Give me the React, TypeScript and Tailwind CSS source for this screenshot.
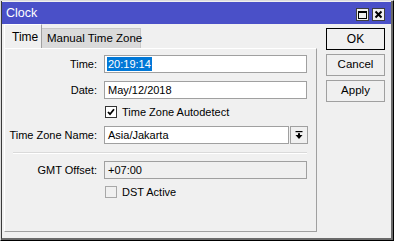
import React from "react";

const FONT = { fontFamily: '"Liberation Sans", Arial, sans-serif' };

function CheckBox({ checked, disabled }: { checked?: boolean; disabled?: boolean }) {
  return (
    <div
      className={`w-[12px] h-[12px] border flex items-center justify-center ${
        disabled ? "border-[#a8a8a8] bg-[#f0f0f0]" : "border-[#333] bg-white"
      }`}
    >
      {checked && (
        <svg width="8" height="8" viewBox="0 0 8 8">
          <path d="M1 4 L3 6.2 L7 1.2" stroke="#000" strokeWidth="1.8" fill="none" />
        </svg>
      )}
    </div>
  );
}

function Row({ label, children, className = "" }: { label: string; children: React.ReactNode; className?: string }) {
  return (
    <div className={`flex items-center h-[18px] ${className}`}>
      <div className="w-[93px] text-right pr-[1px] whitespace-nowrap">{label}</div>
      <div className="ml-[6px] flex">{children}</div>
    </div>
  );
}

export default function App() {
  return (
    <div
      className="w-[394px] h-[241px] bg-[#f0f0f0] border-l border-t border-l-[#dcdcdc] border-t-[#dcdcdc] border-r border-b border-r-black border-b-black text-[11px] text-black"
      style={FONT}
    >
      <div className="h-full flex flex-col border-l border-l-[#3a3a3a] border-r-2 border-b-2 border-r-[#6a6a6a] border-b-[#6a6a6a]">
        {/* title bar */}
        <div className="h-[22px] mt-[1px] bg-[#4a50c8] flex items-center justify-between pl-[4px] pr-[6px]">
          <span className="text-white text-[12.5px]">Clock</span>
          <div className="flex gap-[3px] mt-[3px]">
            <div className="w-[13px] h-[13px] bg-[#f0f0f0] border border-[#404040] flex items-center justify-center">
              <div className="w-[9px] h-[8px] border border-black border-t-2" />
            </div>
            <div className="w-[13px] h-[13px] bg-[#f0f0f0] border border-[#404040] flex items-center justify-center">
              <svg width="9" height="9" viewBox="0 0 9 9">
                <path d="M1.5 1.5 L7.5 7.5 M7.5 1.5 L1.5 7.5" stroke="#000" strokeWidth="2" />
              </svg>
            </div>
          </div>
        </div>

        <div className="flex flex-1">
          {/* tabs + panel */}
          <div className="flex flex-col pl-[2px] w-[315px]">
            <div className="flex items-end h-[24px]">
              <div className="shrink-0 h-[24px] w-[38px] border-l border-t border-white border-r border-r-[#a0a0a0] flex items-center pl-[7px] pt-[1px] text-[12px]">
                Time
              </div>
              <div className="shrink-0 whitespace-nowrap h-[20px] w-[99px] bg-[#dadada] border-t border-r border-[#c8c8c8] flex items-center pl-[5px] text-[11.5px]">
                Manual Time Zone
              </div>
            </div>
            <div className="flex-1 mb-[6px] border-l border-t border-white border-r border-b border-r-[#a0a0a0] border-b-[#a0a0a0] pt-[6px]">
              <Row label="Time:">
                <div className="w-[203px] h-[18px] bg-white border border-[#a0a0a0] flex items-center pl-[2px]">
                  <span className="bg-[#0078d7] text-white px-[1px] leading-[14px]">20:19:14</span>
                </div>
              </Row>
              <Row label="Date:" className="mt-[8px]">
                <div className="w-[203px] h-[18px] bg-white border border-[#a0a0a0] flex items-center pl-[3px]">
                  May/12/2018
                </div>
              </Row>
              <Row label="" className="mt-[4px]">
                <div className="flex items-center gap-[5px] pl-[1px]">
                  <CheckBox checked />
                  <span>Time Zone Autodetect</span>
                </div>
              </Row>
              <Row label="Time Zone Name:" className="mt-[5px]">
                <div className="w-[185px] h-[18px] bg-white border border-[#a0a0a0] flex items-center pl-[3px]">
                  Asia/Jakarta
                </div>
                <div className="w-[18px] h-[18px] ml-[1px] bg-[#f0f0f0] border border-[#a0a0a0] flex items-center justify-center">
                  <svg width="8" height="8" viewBox="0 0 8 8">
                    <rect x="0.5" y="0" width="7" height="1.2" fill="#000" />
                    <rect x="3" y="2.2" width="2" height="2" fill="#000" />
                    <path d="M0.5 4 L7.5 4 L4 8 Z" fill="#000" />
                  </svg>
                </div>
              </Row>
              <div className="ml-[8px] w-[294px] mt-[8px] border-t border-[#dadada] border-b border-b-white" />
              <Row label="GMT Offset:" className="mt-[7px]">
                <div className="w-[203px] h-[18px] bg-[#f0f0f0] border border-[#a0a0a0] flex items-center pl-[3px]">
                  +07:00
                </div>
              </Row>
              <Row label="" className="mt-[4px]">
                <div className="flex items-center gap-[5px] pl-[1px]">
                  <CheckBox disabled />
                  <span>DST Active</span>
                </div>
              </Row>
            </div>
          </div>

          {/* buttons */}
          <div className="flex flex-col gap-[4px] pl-[9px] pt-[4px]">
            <div className="w-[59px] h-[22px] bg-[#f0f0f0] border border-black flex items-center justify-center text-[12px]">
              OK
            </div>
            <div className="w-[59px] h-[22px] bg-[#f0f0f0] border border-[#a0a0a0] flex items-center justify-center text-[11.5px]">
              Cancel
            </div>
            <div className="w-[59px] h-[22px] bg-[#f0f0f0] border border-[#a0a0a0] flex items-center justify-center text-[11.5px]">
              Apply
            </div>
          </div>
        </div>
      </div>
    </div>
  );
}
